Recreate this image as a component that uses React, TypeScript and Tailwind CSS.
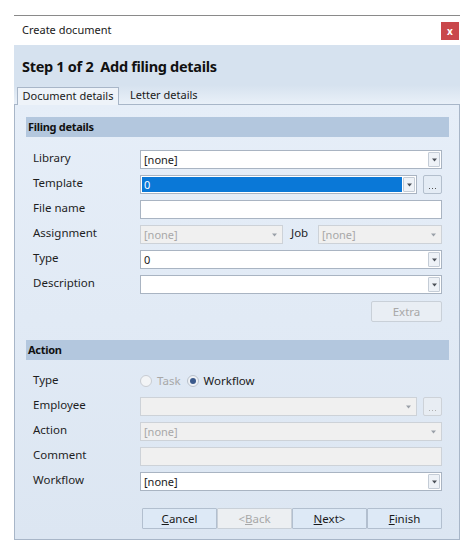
import React from "react";

const font = { fontFamily: '"Noto Sans", "Open Sans", sans-serif' };

function Arrow({ light }: { light?: boolean }) {
  return (
    <svg width="7" height="4" viewBox="0 0 7 4" className="block">
      <path d="M1 0.5 L6 0.5 L3.5 3.5 Z" fill={light ? "#9aa0a8" : "#4a4f57"} />
    </svg>
  );
}

function Combo({
  value,
  selected,
  disabled,
  className = "",
}: {
  value?: string;
  selected?: boolean;
  disabled?: boolean;
  className?: string;
}) {
  if (disabled) {
    return (
      <div
        className={`relative h-[19px] border border-[#cdd2d8] bg-[#f0f0f0] flex items-center ${className}`}
      >
        <span className="pl-[3px] text-[#a8a8a8] leading-none">{value}</span>
        <div className="absolute right-[3px] top-0 bottom-0 w-[10px] flex items-center justify-center">
          <Arrow light />
        </div>
      </div>
    );
  }
  return (
    <div
      className={`relative h-[19px] border border-[#a9b4c2] bg-white flex items-center ${className}`}
    >
      {selected ? (
        <div className="absolute left-[1px] top-[1px] bottom-[1px] right-[14px] bg-[#0a78d7] flex items-center">
          <span className="pl-[2px] text-white leading-none">{value}</span>
        </div>
      ) : (
        <span className="pl-[3px] text-[#1a1a1a] leading-none">{value}</span>
      )}
      <div className="absolute right-[1px] top-[1px] bottom-[1px] w-[12px] border border-[#c4ccd6] bg-[#eef2f7] flex items-center justify-center rounded-[1px]">
        <Arrow />
      </div>
    </div>
  );
}

function TextBox({ disabled, className = "" }: { disabled?: boolean; className?: string }) {
  return (
    <div
      className={`h-[19px] border ${
        disabled ? "border-[#cdd2d8] bg-[#f0f0f0]" : "border-[#a9b4c2] bg-white"
      } ${className}`}
    />
  );
}

function Dots({ disabled }: { disabled?: boolean }) {
  return (
    <div
      className={`w-[19px] h-[19px] border rounded-[2px] flex items-end justify-center pb-[4px] ${
        disabled ? "border-[#cdd2d8] bg-[#e8edf3]" : "border-[#b3bfcd] bg-[#e4ecf5]"
      }`}
    >
      <div className="flex gap-[2px]">
        {[0, 1, 2].map((i) => (
          <div
            key={i}
            className={`w-[1px] h-[1px] ${disabled ? "bg-[#b0b0b0]" : "bg-[#555]"}`}
          />
        ))}
      </div>
    </div>
  );
}

function Row({ label, children }: { label: string; children: React.ReactNode }) {
  return (
    <div className="flex items-center h-[19px]">
      <div className="w-[107px] text-[11.5px] text-[#1e1e1e] leading-none -mt-[3px]">{label}</div>
      <div className="flex-1 flex items-center">{children}</div>
    </div>
  );
}

function Section({ title }: { title: string }) {
  return (
    <div className="h-[20px] bg-[#b3c7de] flex items-center pl-[2px]">
      <span className="font-bold text-[11px] text-[#111] tracking-[-0.3px]">{title}</span>
    </div>
  );
}

function Btn({
  children,
  disabled,
}: {
  children: React.ReactNode;
  disabled?: boolean;
}) {
  return (
    <div
      className={`w-[75px] h-[21px] border flex items-center justify-center text-[11.5px] rounded-[1px] ${
        disabled
          ? "border-[#c9d0d8] bg-[#eceff2] text-[#a8a8a8]"
          : "border-[#b2bfcf] bg-[#dde9f6] text-[#1a1a1a]"
      }`}
    >
      {children}
    </div>
  );
}

export default function App() {
  return (
    <div className="w-[474px] h-[552px] bg-white text-[11px]" style={font}>
      <div className="pt-[15px] px-[14px]">
        <div className="border-t border-[#8a8a8a]">
          {/* Title bar */}
          <div className="h-[29px] flex items-center justify-between pl-[8px] pr-[1px] bg-white">
            <span className="text-[11px] text-[#1a1a1a]">Create document</span>
            <div className="w-[18px] h-[18px] bg-[#c9474b] flex items-center justify-center text-white text-[10px] font-bold leading-none">
              x
            </div>
          </div>
          {/* Step header */}
          <div className="h-[40px] bg-[#d6e2ef] flex items-center pl-[8px] pt-[4px]">
            <span className="font-bold text-[14.5px] text-[#111] tracking-[-0.3px]">
              Step 1 of 2&nbsp; Add filing details
            </span>
          </div>
          {/* Tabs */}
          <div className="h-[19px] bg-gradient-to-b from-[#d6e2ef] to-[#e9f0f8] flex items-end pl-[3px] relative">
            <div className="h-[18px] w-[102px] border border-b-0 border-[#a8b6c8] bg-[#eef3f9] flex items-center justify-center text-[11px] text-[#1a1a1a] relative z-10 top-[1px]">
              Document details
            </div>
            <div className="h-[17px] pl-[11px] flex items-center text-[11px] text-[#1a1a1a]">
              Letter details
            </div>
          </div>
          {/* Panel */}
          <div className="border border-[#a8b6c8] bg-gradient-to-b from-[#e6eef8] to-[#dce6f2] pl-[11px] pr-[10px] pt-[12px] pb-[11px] h-[436px]">
            <Section title="Filing details" />
            <div className="px-[7px] mt-[13px] flex flex-col gap-[6px]">
              <Row label="Library">
                <Combo value="[none]" className="flex-1" />
              </Row>
              <Row label="Template">
                <Combo value="0" selected className="flex-1" />
                <div className="ml-[6px]">
                  <Dots />
                </div>
              </Row>
              <Row label="File name">
                <TextBox className="flex-1" />
              </Row>
              <Row label="Assignment">
                <Combo value="[none]" disabled className="w-[143px]" />
                <span className="ml-[8px] w-[27px] text-[11.5px] text-[#1e1e1e] -mt-[3px]">Job</span>
                <Combo value="[none]" disabled className="flex-1" />
              </Row>
              <Row label="Type">
                <Combo value="0" className="flex-1" />
              </Row>
              <Row label="Description">
                <Combo className="flex-1" />
              </Row>
            </div>
            <div className="flex justify-end pr-[7px] mt-[7px]">
              <div className="w-[71px] h-[21px] border border-[#c9d0d8] bg-[#e9eef4] rounded-[2px] flex items-center justify-center text-[11.5px] text-[#a8a8a8]">
                Extra
              </div>
            </div>
            <div className="mt-[18px]">
              <Section title="Action" />
            </div>
            <div className="px-[7px] mt-[12px] flex flex-col gap-[6px]">
              <Row label="Type">
                <div className="flex items-center -mt-[2px]">
                  <div className="w-[12px] h-[12px] rounded-full border border-[#c8ccd2] bg-[#f2f4f6]" />
                  <span className="ml-[5px] text-[#a8a8a8] text-[11.5px]">Task</span>
                  <div className="ml-[6px] w-[12px] h-[12px] rounded-full border border-[#b9c2cc] bg-[#eef1f5] flex items-center justify-center">
                    <div className="w-[6px] h-[6px] rounded-full bg-[#3b5a8c]" />
                  </div>
                  <span className="ml-[5px] text-[#1a1a1a] text-[11.5px]">Workflow</span>
                </div>
              </Row>
              <Row label="Employee">
                <Combo disabled className="flex-1" />
                <div className="ml-[6px]">
                  <Dots disabled />
                </div>
              </Row>
              <Row label="Action">
                <Combo value="[none]" disabled className="flex-1" />
              </Row>
              <Row label="Comment">
                <TextBox disabled className="flex-1" />
              </Row>
              <Row label="Workflow">
                <Combo value="[none]" className="flex-1" />
              </Row>
            </div>
            <div className="flex pl-[116px] mt-[17px]">
              <Btn>
                <span>
                  <span className="underline">C</span>ancel
                </span>
              </Btn>
              <Btn disabled>
                <span>
                  &lt;<span className="underline">B</span>ack
                </span>
              </Btn>
              <Btn>
                <span>
                  <span className="underline">N</span>ext&gt;
                </span>
              </Btn>
              <Btn>
                <span>
                  <span className="underline">F</span>inish
                </span>
              </Btn>
            </div>
          </div>
        </div>
      </div>
    </div>
  );
}
